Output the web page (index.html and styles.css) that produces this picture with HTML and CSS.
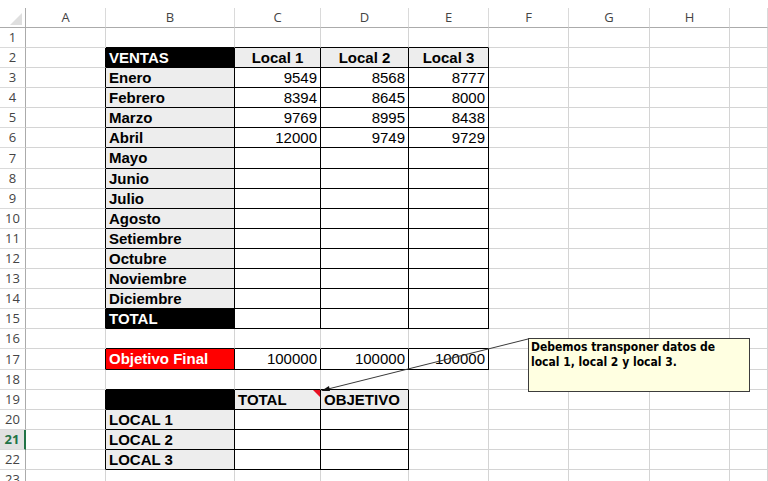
FILE: index.html
```html
<!DOCTYPE html>
<html lang="es">
<head>
<meta charset="utf-8">
<title>Ventas</title>
<link rel="stylesheet" href="styles.css">
</head>
<body>
<div class="sheet">
  <div class="row colhead">
    <div class="c corner"><span class="tri"></span></div>
    <div class="c">A</div><div class="c">B</div><div class="c">C</div><div class="c">D</div>
    <div class="c">E</div><div class="c">F</div><div class="c">G</div><div class="c">H</div><div class="c"></div>
  </div>
  <div class="row">
    <div class="c rh">1</div><div class="c"></div><div class="c b"></div><div class="c b"></div><div class="c b"></div><div class="c b"></div><div class="c"></div><div class="c"></div><div class="c"></div><div class="c"></div>
  </div>
  <div class="row">
    <div class="c rh">2</div><div class="c r"></div><div class="c r b blk lbl">VENTAS</div><div class="c r b gry ctr">Local 1</div><div class="c r b gry ctr">Local 2</div><div class="c r b gry ctr">Local 3</div><div class="c"></div><div class="c"></div><div class="c"></div><div class="c"></div>
  </div>
  <div class="row">
    <div class="c rh">3</div><div class="c r"></div><div class="c r b gry lbl">Enero</div><div class="c r b num">9549</div><div class="c r b num">8568</div><div class="c r b num">8777</div><div class="c"></div><div class="c"></div><div class="c"></div><div class="c"></div>
  </div>
  <div class="row">
    <div class="c rh">4</div><div class="c r"></div><div class="c r b gry lbl">Febrero</div><div class="c r b num">8394</div><div class="c r b num">8645</div><div class="c r b num">8000</div><div class="c"></div><div class="c"></div><div class="c"></div><div class="c"></div>
  </div>
  <div class="row">
    <div class="c rh">5</div><div class="c r"></div><div class="c r b gry lbl">Marzo</div><div class="c r b num">9769</div><div class="c r b num">8995</div><div class="c r b num">8438</div><div class="c"></div><div class="c"></div><div class="c"></div><div class="c"></div>
  </div>
  <div class="row">
    <div class="c rh">6</div><div class="c r"></div><div class="c r b gry lbl">Abril</div><div class="c r b num">12000</div><div class="c r b num">9749</div><div class="c r b num">9729</div><div class="c"></div><div class="c"></div><div class="c"></div><div class="c"></div>
  </div>
  <div class="row tall">
    <div class="c rh">7</div><div class="c r"></div><div class="c r b gry lbl">Mayo</div><div class="c r b"></div><div class="c r b"></div><div class="c r b"></div><div class="c"></div><div class="c"></div><div class="c"></div><div class="c"></div>
  </div>
  <div class="row">
    <div class="c rh">8</div><div class="c r"></div><div class="c r b gry lbl">Junio</div><div class="c r b"></div><div class="c r b"></div><div class="c r b"></div><div class="c"></div><div class="c"></div><div class="c"></div><div class="c"></div>
  </div>
  <div class="row">
    <div class="c rh">9</div><div class="c r"></div><div class="c r b gry lbl">Julio</div><div class="c r b"></div><div class="c r b"></div><div class="c r b"></div><div class="c"></div><div class="c"></div><div class="c"></div><div class="c"></div>
  </div>
  <div class="row">
    <div class="c rh">10</div><div class="c r"></div><div class="c r b gry lbl">Agosto</div><div class="c r b"></div><div class="c r b"></div><div class="c r b"></div><div class="c"></div><div class="c"></div><div class="c"></div><div class="c"></div>
  </div>
  <div class="row">
    <div class="c rh">11</div><div class="c r"></div><div class="c r b gry lbl">Setiembre</div><div class="c r b"></div><div class="c r b"></div><div class="c r b"></div><div class="c"></div><div class="c"></div><div class="c"></div><div class="c"></div>
  </div>
  <div class="row">
    <div class="c rh">12</div><div class="c r"></div><div class="c r b gry lbl">Octubre</div><div class="c r b"></div><div class="c r b"></div><div class="c r b"></div><div class="c"></div><div class="c"></div><div class="c"></div><div class="c"></div>
  </div>
  <div class="row">
    <div class="c rh">13</div><div class="c r"></div><div class="c r b gry lbl">Noviembre</div><div class="c r b"></div><div class="c r b"></div><div class="c r b"></div><div class="c"></div><div class="c"></div><div class="c"></div><div class="c"></div>
  </div>
  <div class="row">
    <div class="c rh">14</div><div class="c r"></div><div class="c r b gry lbl">Diciembre</div><div class="c r b"></div><div class="c r b"></div><div class="c r b"></div><div class="c"></div><div class="c"></div><div class="c"></div><div class="c"></div>
  </div>
  <div class="row">
    <div class="c rh">15</div><div class="c r"></div><div class="c r b blk lbl">TOTAL</div><div class="c r b"></div><div class="c r b"></div><div class="c r b"></div><div class="c"></div><div class="c"></div><div class="c"></div><div class="c"></div>
  </div>
  <div class="row">
    <div class="c rh">16</div><div class="c"></div><div class="c b"></div><div class="c b"></div><div class="c b"></div><div class="c b"></div><div class="c"></div><div class="c"></div><div class="c"></div><div class="c"></div>
  </div>
  <div class="row tall">
    <div class="c rh">17</div><div class="c r"></div><div class="c r b red lbl">Objetivo Final</div><div class="c r b num">100000</div><div class="c r b num">100000</div><div class="c r b num">100000</div><div class="c"></div><div class="c"></div><div class="c"></div><div class="c"></div>
  </div>
  <div class="row">
    <div class="c rh">18</div><div class="c"></div><div class="c b"></div><div class="c b"></div><div class="c b"></div><div class="c"></div><div class="c"></div><div class="c"></div><div class="c"></div><div class="c"></div>
  </div>
  <div class="row">
    <div class="c rh">19</div><div class="c r"></div><div class="c r b blk"></div><div class="c r b gry lbl note">TOTAL</div><div class="c r b gry lbl">OBJETIVO</div><div class="c"></div><div class="c"></div><div class="c"></div><div class="c"></div><div class="c"></div>
  </div>
  <div class="row">
    <div class="c rh">20</div><div class="c r"></div><div class="c r b gry lbl">LOCAL 1</div><div class="c r b"></div><div class="c r b"></div><div class="c"></div><div class="c"></div><div class="c"></div><div class="c"></div><div class="c"></div>
  </div>
  <div class="row">
    <div class="c rh sel">21</div><div class="c r"></div><div class="c r b gry lbl">LOCAL 2</div><div class="c r b"></div><div class="c r b"></div><div class="c"></div><div class="c"></div><div class="c"></div><div class="c"></div><div class="c"></div>
  </div>
  <div class="row">
    <div class="c rh">22</div><div class="c r"></div><div class="c r b gry lbl">LOCAL 3</div><div class="c r b"></div><div class="c r b"></div><div class="c"></div><div class="c"></div><div class="c"></div><div class="c"></div><div class="c"></div>
  </div>
  <div class="row">
    <div class="c rh">23</div><div class="c"></div><div class="c"></div><div class="c"></div><div class="c"></div><div class="c"></div><div class="c"></div><div class="c"></div><div class="c"></div><div class="c"></div>
  </div>
</div>

<svg class="arrow" width="768" height="481" viewBox="0 0 768 481" aria-hidden="true">
  <line x1="528" y1="339" x2="326" y2="389.5" stroke="#3a3a3a" stroke-width="1"/>
  <polygon points="321,391 329,386 330,391" fill="#111"/>
</svg>

<div class="comment">Debemos transponer datos de local 1, local 2 y local 3.</div>
</body>
</html>
```

FILE: styles.css
```css
* {
  box-sizing: border-box;
  margin: 0;
  padding: 0;
}

html, body {
  width: 768px;
  height: 481px;
  overflow: hidden;
  background: #fff;
}

body {
  position: relative;
  font-family: "Liberation Sans", Arial, sans-serif;
  color: #000;
}

.sheet {
  padding-top: 8px;
}

.row {
  display: grid;
  grid-template-columns: 26px 80px 129px 86px 88px 80px 80px 81px 80px 1fr;
  height: 20px;
}

.row.tall {
  height: 21px;
}

.c {
  border-right: 1px solid #d4d4d4;
  border-bottom: 1px solid #d4d4d4;
  font-size: 15px;
  line-height: 19px;
  white-space: nowrap;
  overflow: hidden;
  padding: 0 3px;
}

.row.tall .c {
  line-height: 20px;
}

/* column headers */
.colhead .c {
  border-bottom-color: #ababab;
  border-right-color: #dadada;
  font-family: "Open Sans", "Noto Sans", sans-serif;
  font-size: 13px;
  line-height: 19px;
  color: #444;
  text-align: center;
}

.colhead .corner {
  border-right-color: #ababab;
  display: flex;
  align-items: flex-end;
  justify-content: flex-end;
  padding: 0 3px 2px 0;
}

.tri {
  width: 0;
  height: 0;
  border-left: 12px solid transparent;
  border-bottom: 12px solid #dfdfdf;
}

/* row headers */
.rh {
  font-family: "Open Sans", "Noto Sans", sans-serif;
  font-size: 13px;
  color: #444;
  text-align: center;
  border-right-color: #ababab;
  border-bottom-color: #dadada;
  padding: 0;
}

.rh.sel {
  background: #e1e1e1;
  color: #217346;
  font-weight: 700;
  border-right: 2px solid #217346;
}

/* black cell borders */
.c.r {
  border-right-color: #000;
}

.c.b {
  border-bottom-color: #000;
}

/* cell formats */
.lbl {
  font-weight: 700;
  text-align: left;
}

.ctr {
  font-weight: 700;
  text-align: center;
}

.num {
  text-align: right;
}

.gry {
  background: #ededed;
}

.blk {
  background: #000;
  color: #fff;
}

.red {
  background: #ff0000;
  color: #fff;
}

.note {
  position: relative;
}

.note::after {
  content: "";
  position: absolute;
  top: 0;
  right: 0;
  width: 0;
  height: 0;
  border-top: 7px solid #e81123;
  border-left: 7px solid transparent;
}

/* comment overlay */
.arrow {
  position: absolute;
  left: 0;
  top: 0;
  pointer-events: none;
}

.comment {
  position: absolute;
  left: 528px;
  top: 338px;
  width: 222px;
  height: 54px;
  background: #ffffe1;
  border: 1px solid #3c3c3c;
  padding: 1px 2px;
  font-family: "DejaVu Sans Condensed", "DejaVu Sans", Tahoma, sans-serif;
  font-stretch: condensed;
  font-weight: 700;
  font-size: 12px;
  line-height: 15px;
  color: #000;
}
```
